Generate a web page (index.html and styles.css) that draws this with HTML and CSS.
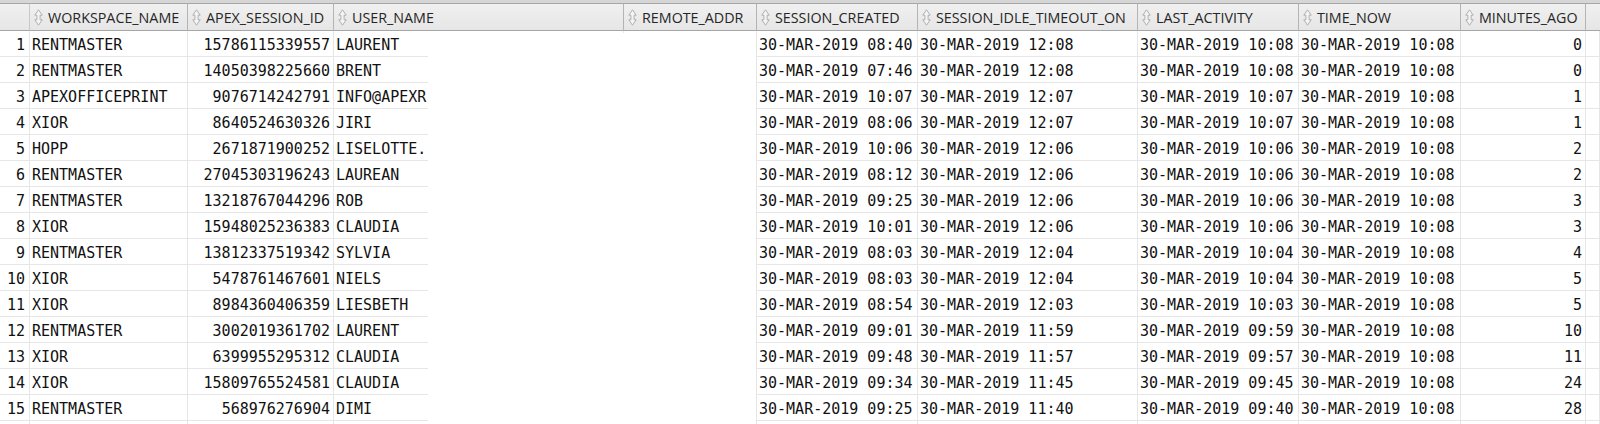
FILE: index.html
```html
<!DOCTYPE html>
<html>
<head>
<meta charset="utf-8">
<link rel="stylesheet" href="styles.css">
</head>
<body>
<div class="grid-wrap">
  <div class="row head">
    <div class="hc rn"></div>
    <div class="hc"><svg class="sort" viewBox="0 0 9 17"><path d="M4.5 0.8 L8.2 6.2 L6.1 6.2 L6.1 10.8 L8.2 10.8 L4.5 16.2 L0.8 10.8 L2.9 10.8 L2.9 6.2 L0.8 6.2 Z"/></svg><span>WORKSPACE_NAME</span></div>
    <div class="hc"><svg class="sort" viewBox="0 0 9 17"><path d="M4.5 0.8 L8.2 6.2 L6.1 6.2 L6.1 10.8 L8.2 10.8 L4.5 16.2 L0.8 10.8 L2.9 10.8 L2.9 6.2 L0.8 6.2 Z"/></svg><span>APEX_SESSION_ID</span></div>
    <div class="hc"><svg class="sort" viewBox="0 0 9 17"><path d="M4.5 0.8 L8.2 6.2 L6.1 6.2 L6.1 10.8 L8.2 10.8 L4.5 16.2 L0.8 10.8 L2.9 10.8 L2.9 6.2 L0.8 6.2 Z"/></svg><span>USER_NAME</span></div>
    <div class="hc"><svg class="sort" viewBox="0 0 9 17"><path d="M4.5 0.8 L8.2 6.2 L6.1 6.2 L6.1 10.8 L8.2 10.8 L4.5 16.2 L0.8 10.8 L2.9 10.8 L2.9 6.2 L0.8 6.2 Z"/></svg><span>REMOTE_ADDR</span></div>
    <div class="hc"><svg class="sort" viewBox="0 0 9 17"><path d="M4.5 0.8 L8.2 6.2 L6.1 6.2 L6.1 10.8 L8.2 10.8 L4.5 16.2 L0.8 10.8 L2.9 10.8 L2.9 6.2 L0.8 6.2 Z"/></svg><span>SESSION_CREATED</span></div>
    <div class="hc"><svg class="sort" viewBox="0 0 9 17"><path d="M4.5 0.8 L8.2 6.2 L6.1 6.2 L6.1 10.8 L8.2 10.8 L4.5 16.2 L0.8 10.8 L2.9 10.8 L2.9 6.2 L0.8 6.2 Z"/></svg><span>SESSION_IDLE_TIMEOUT_ON</span></div>
    <div class="hc"><svg class="sort" viewBox="0 0 9 17"><path d="M4.5 0.8 L8.2 6.2 L6.1 6.2 L6.1 10.8 L8.2 10.8 L4.5 16.2 L0.8 10.8 L2.9 10.8 L2.9 6.2 L0.8 6.2 Z"/></svg><span>LAST_ACTIVITY</span></div>
    <div class="hc"><svg class="sort" viewBox="0 0 9 17"><path d="M4.5 0.8 L8.2 6.2 L6.1 6.2 L6.1 10.8 L8.2 10.8 L4.5 16.2 L0.8 10.8 L2.9 10.8 L2.9 6.2 L0.8 6.2 Z"/></svg><span>TIME_NOW</span></div>
    <div class="hc"><svg class="sort" viewBox="0 0 9 17"><path d="M4.5 0.8 L8.2 6.2 L6.1 6.2 L6.1 10.8 L8.2 10.8 L4.5 16.2 L0.8 10.8 L2.9 10.8 L2.9 6.2 L0.8 6.2 Z"/></svg><span>MINUTES_AGO</span></div>
    <div class="hc filler"></div>
  </div>

  <div class="row"><div class="c rn">1</div><div class="c">RENTMASTER</div><div class="c r">15786115339557</div><div class="c">LAURENT</div><div class="c"></div><div class="c">30-MAR-2019 08:40</div><div class="c">30-MAR-2019 12:08</div><div class="c">30-MAR-2019 10:08</div><div class="c">30-MAR-2019 10:08</div><div class="c r">0</div><div class="c"></div></div>
  <div class="row"><div class="c rn">2</div><div class="c">RENTMASTER</div><div class="c r">14050398225660</div><div class="c">BRENT</div><div class="c"></div><div class="c">30-MAR-2019 07:46</div><div class="c">30-MAR-2019 12:08</div><div class="c">30-MAR-2019 10:08</div><div class="c">30-MAR-2019 10:08</div><div class="c r">0</div><div class="c"></div></div>
  <div class="row"><div class="c rn">3</div><div class="c">APEXOFFICEPRINT</div><div class="c r">9076714242791</div><div class="c">INFO@APEXR</div><div class="c"></div><div class="c">30-MAR-2019 10:07</div><div class="c">30-MAR-2019 12:07</div><div class="c">30-MAR-2019 10:07</div><div class="c">30-MAR-2019 10:08</div><div class="c r">1</div><div class="c"></div></div>
  <div class="row"><div class="c rn">4</div><div class="c">XIOR</div><div class="c r">8640524630326</div><div class="c">JIRI</div><div class="c"></div><div class="c">30-MAR-2019 08:06</div><div class="c">30-MAR-2019 12:07</div><div class="c">30-MAR-2019 10:07</div><div class="c">30-MAR-2019 10:08</div><div class="c r">1</div><div class="c"></div></div>
  <div class="row"><div class="c rn">5</div><div class="c">HOPP</div><div class="c r">2671871900252</div><div class="c">LISELOTTE.</div><div class="c"></div><div class="c">30-MAR-2019 10:06</div><div class="c">30-MAR-2019 12:06</div><div class="c">30-MAR-2019 10:06</div><div class="c">30-MAR-2019 10:08</div><div class="c r">2</div><div class="c"></div></div>
  <div class="row"><div class="c rn">6</div><div class="c">RENTMASTER</div><div class="c r">27045303196243</div><div class="c">LAUREAN</div><div class="c"></div><div class="c">30-MAR-2019 08:12</div><div class="c">30-MAR-2019 12:06</div><div class="c">30-MAR-2019 10:06</div><div class="c">30-MAR-2019 10:08</div><div class="c r">2</div><div class="c"></div></div>
  <div class="row"><div class="c rn">7</div><div class="c">RENTMASTER</div><div class="c r">13218767044296</div><div class="c">ROB</div><div class="c"></div><div class="c">30-MAR-2019 09:25</div><div class="c">30-MAR-2019 12:06</div><div class="c">30-MAR-2019 10:06</div><div class="c">30-MAR-2019 10:08</div><div class="c r">3</div><div class="c"></div></div>
  <div class="row"><div class="c rn">8</div><div class="c">XIOR</div><div class="c r">15948025236383</div><div class="c">CLAUDIA</div><div class="c"></div><div class="c">30-MAR-2019 10:01</div><div class="c">30-MAR-2019 12:06</div><div class="c">30-MAR-2019 10:06</div><div class="c">30-MAR-2019 10:08</div><div class="c r">3</div><div class="c"></div></div>
  <div class="row"><div class="c rn">9</div><div class="c">RENTMASTER</div><div class="c r">13812337519342</div><div class="c">SYLVIA</div><div class="c"></div><div class="c">30-MAR-2019 08:03</div><div class="c">30-MAR-2019 12:04</div><div class="c">30-MAR-2019 10:04</div><div class="c">30-MAR-2019 10:08</div><div class="c r">4</div><div class="c"></div></div>
  <div class="row"><div class="c rn">10</div><div class="c">XIOR</div><div class="c r">5478761467601</div><div class="c">NIELS</div><div class="c"></div><div class="c">30-MAR-2019 08:03</div><div class="c">30-MAR-2019 12:04</div><div class="c">30-MAR-2019 10:04</div><div class="c">30-MAR-2019 10:08</div><div class="c r">5</div><div class="c"></div></div>
  <div class="row"><div class="c rn">11</div><div class="c">XIOR</div><div class="c r">8984360406359</div><div class="c">LIESBETH</div><div class="c"></div><div class="c">30-MAR-2019 08:54</div><div class="c">30-MAR-2019 12:03</div><div class="c">30-MAR-2019 10:03</div><div class="c">30-MAR-2019 10:08</div><div class="c r">5</div><div class="c"></div></div>
  <div class="row"><div class="c rn">12</div><div class="c">RENTMASTER</div><div class="c r">3002019361702</div><div class="c">LAURENT</div><div class="c"></div><div class="c">30-MAR-2019 09:01</div><div class="c">30-MAR-2019 11:59</div><div class="c">30-MAR-2019 09:59</div><div class="c">30-MAR-2019 10:08</div><div class="c r">10</div><div class="c"></div></div>
  <div class="row"><div class="c rn">13</div><div class="c">XIOR</div><div class="c r">6399955295312</div><div class="c">CLAUDIA</div><div class="c"></div><div class="c">30-MAR-2019 09:48</div><div class="c">30-MAR-2019 11:57</div><div class="c">30-MAR-2019 09:57</div><div class="c">30-MAR-2019 10:08</div><div class="c r">11</div><div class="c"></div></div>
  <div class="row"><div class="c rn">14</div><div class="c">XIOR</div><div class="c r">15809765524581</div><div class="c">CLAUDIA</div><div class="c"></div><div class="c">30-MAR-2019 09:34</div><div class="c">30-MAR-2019 11:45</div><div class="c">30-MAR-2019 09:45</div><div class="c">30-MAR-2019 10:08</div><div class="c r">24</div><div class="c"></div></div>
  <div class="row"><div class="c rn">15</div><div class="c">RENTMASTER</div><div class="c r">568976276904</div><div class="c">DIMI</div><div class="c"></div><div class="c">30-MAR-2019 09:25</div><div class="c">30-MAR-2019 11:40</div><div class="c">30-MAR-2019 09:40</div><div class="c">30-MAR-2019 10:08</div><div class="c r">28</div><div class="c"></div></div>
  <div class="row"><div class="c rn"></div><div class="c"></div><div class="c"></div><div class="c"></div><div class="c"></div><div class="c"></div><div class="c"></div><div class="c"></div><div class="c"></div><div class="c"></div><div class="c"></div></div>

  <div class="mask"></div>
</div>
</body>
</html>
```

FILE: styles.css
```css
* { box-sizing: border-box; }
html, body {
  margin: 0;
  padding: 0;
  background: #ffffff;
  overflow: hidden;
}
.grid-wrap {
  position: relative;
  width: 1600px;
  height: 424px;
  overflow: hidden;
}
.row {
  display: grid;
  grid-template-columns: 30px 158px 146px 290px 133px 161px 220px 161px 162px 125px 14px;
  height: 26px;
}
.row.head {
  height: 31px;
  padding-top: 3px;
  background: #d6d6d6;
}
.hc {
  display: flex;
  align-items: center;
  gap: 5px;
  padding-left: 4px;
  background: linear-gradient(#f0f0f0, #e6e6e6);
  border-top: 1px solid #a6a6a6;
  border-bottom: 1px solid #a6a6a6;
  border-right: 1px solid #b4b4b4;
  font-family: "Open Sans", "DejaVu Sans", sans-serif;
  font-size: 14.3px;
  line-height: 20px;
  color: #262626;
  white-space: nowrap;
  overflow: hidden;
}
.hc span { padding-top: 1px; }
.hc.rn { border-right-color: #c8c8c8; }
.hc.filler { border-right: none; }
.sort {
  width: 9px;
  height: 17px;
  flex: none;
}
.sort path {
  fill: #f4f4f4;
  stroke: #a9a9a9;
  stroke-width: 0.9;
  stroke-linejoin: round;
}
.c {
  border-right: 1px solid #e6e6e6;
  border-bottom: 1px solid #e6e6e6;
  font-family: "DejaVu Sans Mono", "Liberation Mono", monospace;
  font-size: 15px;
  color: #111;
  line-height: 24px;
  padding: 2px 2px 0 2px;
  white-space: nowrap;
  overflow: hidden;
}
.c.r { text-align: right; padding-right: 3px; }
.c.rn { text-align: right; padding-right: 4px; }
.mask {
  position: absolute;
  left: 428px;
  top: 33px;
  width: 328px;
  height: 391px;
  background: #ffffff;
}
```
